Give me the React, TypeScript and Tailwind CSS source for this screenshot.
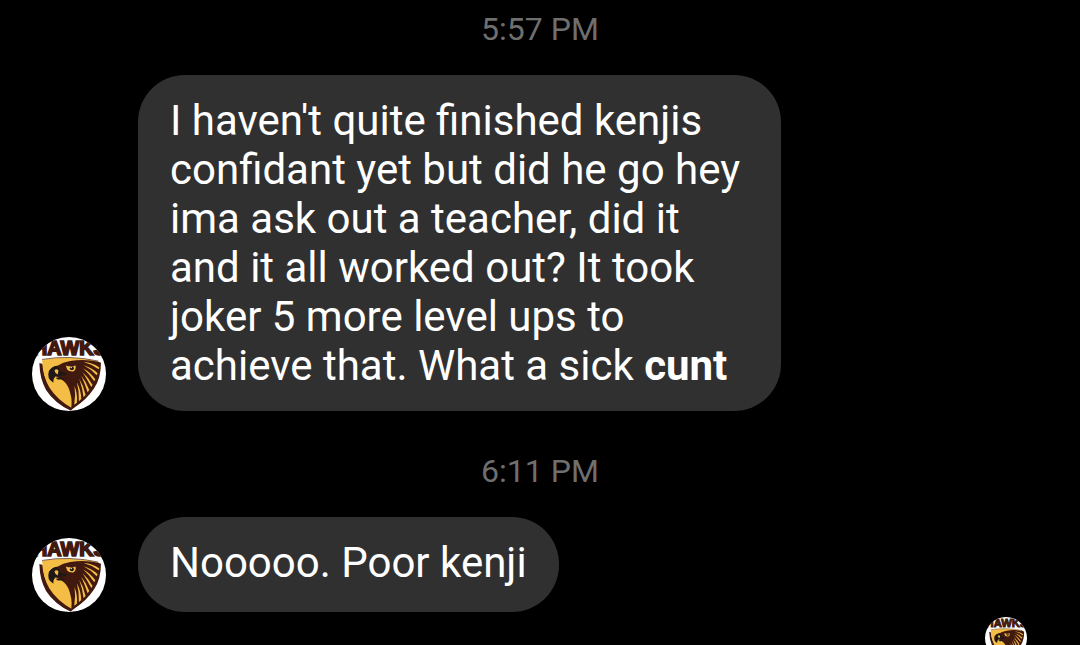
import React from 'react';
import { clsx } from 'clsx';

interface MessageProps {
  children: React.ReactNode;
}

const HawksAvatar: React.FC<{ className?: string }> = ({ className }) => {
  return (
    <svg
      viewBox="24 22 221 221"
      role="img"
      aria-label="Hawks"
      className={clsx('shrink-0 rounded-full bg-white', className)}
    >
      <text
        x="137"
        y="75"
        textAnchor="middle"
        fontSize="59"
        fill="#42190f"
        stroke="#42190f"
        strokeWidth="5"
        className="font-['Liberation_Sans',sans-serif] font-bold"
      >
        HAWKS
      </text>

      {/* shield */}
      <path d="M46 100 L56 103 Q58 143 78 171 Q102 208 144 232 L140 242 Q92 220 66 180 Q47 147 46 100 Z" fill="#42190f" />
      <path d="M54 90 Q137 76 222 95 Q224 137 208 165 Q188 205 143 234 Q99 210 76 173 Q56 140 54 90 Z" fill="#f4bd45" />
      <path d="M54 89 Q137 75 222 94" fill="none" stroke="#42190f" strokeWidth="2" />

      {/* head and feathers */}
      <path
        d="M74 126 Q82 110 100 108 Q116 97 138 94 Q180 87 222 96 L230 99 Q230 146 209 176 Q186 210 154 230 L140 241 Q145 213 139 193 Q134 168 120 155 Q109 146 101 142 Z"
        fill="#42190f"
      />
      {/* gaps between the feathers */}
      <g fill="#f4bd45">
        <path d="M178 97 Q206 99 225 113 L223 118 Q203 104 178 97 Z" />
        <path d="M178 106 Q203 113 220 130 L217 136 Q200 117 178 106 Z" />
        <path d="M177 116 Q199 128 213 148 L210 154 Q194 131 177 116 Z" />
        <path d="M175 127 Q193 143 205 165 L201 171 Q188 147 175 127 Z" />
        <path d="M171 138 Q186 156 195 180 L190 187 Q181 160 171 138 Z" />
        <path d="M165 147 Q179 169 184 195 L178 202 Q174 172 165 147 Z" />
        <path d="M158 157 Q171 181 171 207 L164 214 Q165 183 158 157 Z" />
        <path d="M151 168 Q161 193 158 218 L150 224 Q155 195 151 168 Z" />
      </g>

      {/* beak */}
      <path d="M75 122 Q87 108 100 108 L107 121 Q112 128 121 127 L130 135 Q115 138 103 139 L94 140 Q87 146 88 159 Q66 146 75 122 Z" fill="#201817" />
      <path d="M91 121 Q98 115 103 122 L101 134 Q92 129 91 121 Z" fill="#f4bd45" />
      <path d="M94 144 Q108 141 124 145 Q113 150 101 149 Z" fill="#201817" />

      {/* eye */}
      <path d="M125 107 Q140 112 154 107 Q157 119 147 125 Q135 126 129 119 Z" fill="#f4bd45" />
      <circle cx="143" cy="115" r="6" fill="#201817" />
      <circle cx="141" cy="113" r="2" fill="#fff" />
    </svg>
  );
};

const Timestamp: React.FC<MessageProps> = ({ children }) => {
  return <time className="text-center text-[32px] leading-[38px] text-[#6f6f6f]">{children}</time>;
};

const Message: React.FC<MessageProps> = ({ children }) => {
  return (
    <div className="mt-[27px] flex items-end gap-8 px-8">
      <HawksAvatar className="size-[74px]" />
      <p className="min-h-[95px] max-w-[643px] rounded-[47px] bg-[#303030] px-8 py-[21px] text-[42px] leading-[49px] text-white">
        {children}
      </p>
    </div>
  );
};

export default function App() {
  return (
    <main className="flex h-screen flex-col overflow-hidden bg-black pt-[10px] font-[Roboto,sans-serif]">
      <Timestamp>5:57 PM</Timestamp>
      <Message>
        I haven't quite finished kenjis confidant yet but did he go hey ima ask out a teacher, did it and
        it all worked out? It took joker 5 more level ups to achieve that. What a sick{' '}
        <strong className="font-bold">cunt</strong>
      </Message>

      <div className="mt-[41px] flex flex-col">
        <Timestamp>6:11 PM</Timestamp>
        <Message>Nooooo. Poor kenji</Message>
      </div>

      {/* read receipt */}
      <div className="mt-[5px] flex justify-end pr-[53px]">
        <HawksAvatar className="size-[42px]" />
      </div>
    </main>
  );
}
